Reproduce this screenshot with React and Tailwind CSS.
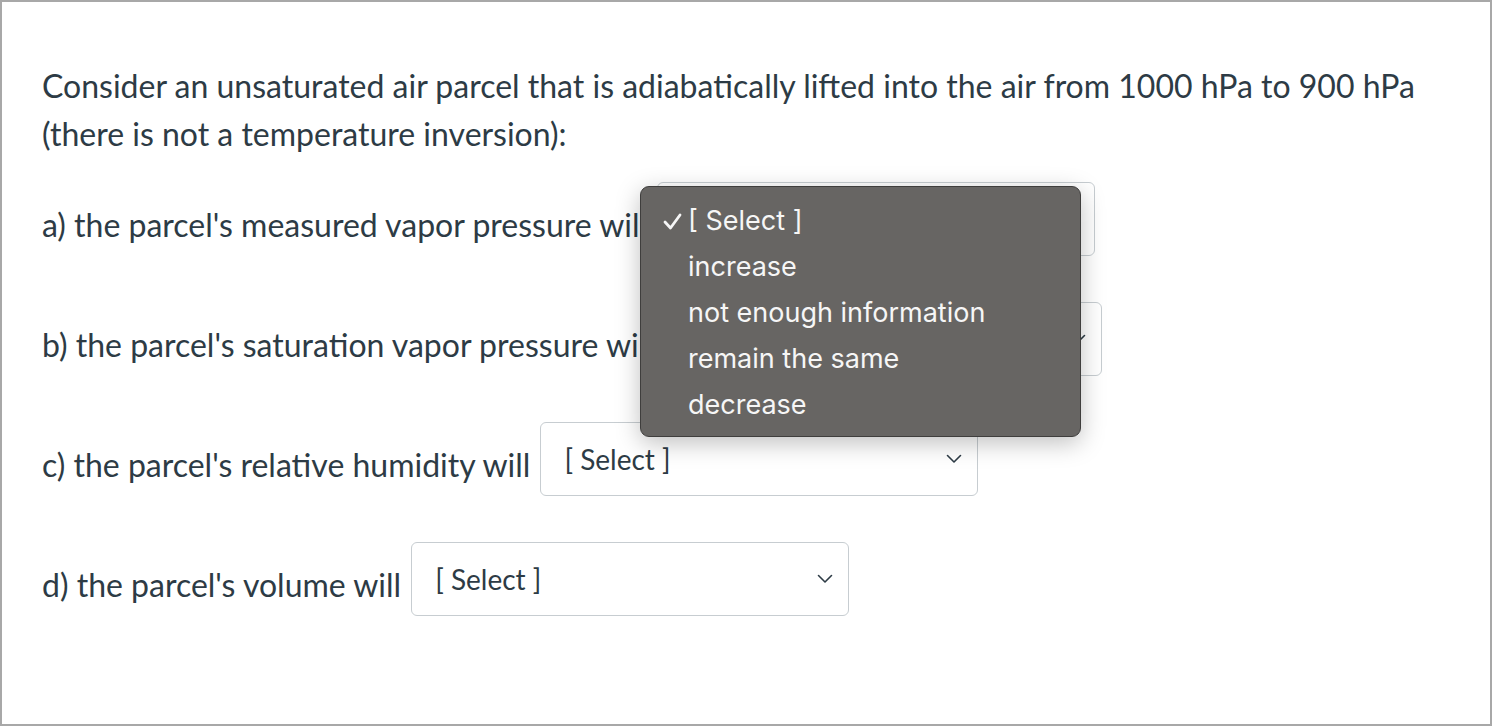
import React from "react";

const rows = [
  { id: "a", label: "a) the parcel's measured vapor pressure will" },
  { id: "b", label: "b) the parcel's saturation vapor pressure will" },
  { id: "c", label: "c) the parcel's relative humidity will" },
  { id: "d", label: "d) the parcel's volume will" },
];

const options = ["[ Select ]", "increase", "not enough information", "remain the same", "decrease"];

function Chevron() {
  return (
    <svg width="16" height="10" viewBox="0 0 16 10" fill="none">
      <polyline points="1.5,1.5 8,8 14.5,1.5" stroke="#2d3b45" strokeWidth="1.6" strokeLinecap="round" strokeLinejoin="round" />
    </svg>
  );
}

function SelectBox() {
  return (
    <div className="ml-[10px] flex h-[74px] w-[438px] shrink-0 items-center justify-between rounded-[6px] border border-[#c7cdd1] bg-white pl-[23px] pr-[15px]">
      <span className="-mt-[1px] text-[28px] text-[#2d3b45]">[ Select ]</span>
      <Chevron />
    </div>
  );
}

export default function App() {
  return (
    <div className="relative h-[726px] w-full border-2 border-[#a8a8a8] bg-white font-['Lato',sans-serif] text-[#2d3b45]">
      <div className="px-[40px] pt-[60px]">
        <p className="text-[32px] leading-[48px]">
          Consider an unsaturated air parcel that is adiabatically lifted into the air from 1000 hPa to 900 hPa (there is not a temperature inversion):
        </p>
        <div className="mt-[24px] flex flex-col gap-[46px]">
          {rows.map((r) => (
            <div key={r.id} className="flex items-center">
              <span className="mt-[12px] whitespace-nowrap text-[32px] leading-[48px]">{r.label}</span>
              <SelectBox />
            </div>
          ))}
        </div>
      </div>

      {/* native popup menu open on the first select */}
      <div className="absolute left-[638px] top-[184px] h-[251px] w-[441px] rounded-[9px] border border-[#3f3e3d] bg-[#676563] pt-[11px] shadow-[0_6px_24px_rgba(0,0,0,0.25)] font-['Inter',sans-serif] text-[27px] text-[#f6f6f6]">
        {options.map((o, i) => (
          <div key={o} className="flex h-[46px] items-center">
            <span className="flex w-[47px] justify-end pr-[6px]">
              {i === 0 && (
                <svg width="19" height="17" viewBox="0 0 19 17" fill="none">
                  <polyline points="2,9 7.5,15 17,2" stroke="#f6f6f6" strokeWidth="2.8" strokeLinecap="round" strokeLinejoin="round" />
                </svg>
              )}
            </span>
            <span>{o}</span>
          </div>
        ))}
      </div>
    </div>
  );
}
